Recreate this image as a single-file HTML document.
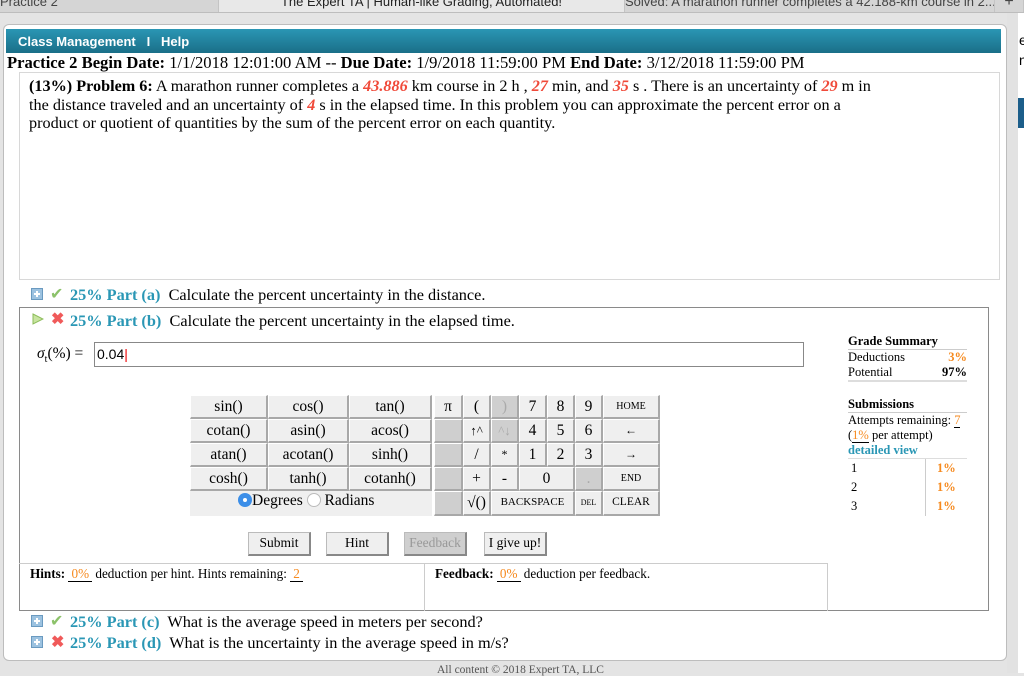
<!DOCTYPE html>
<html><head><meta charset="utf-8"><style>
*{margin:0;padding:0;box-sizing:border-box}
body{width:1024px;height:673px;overflow:hidden;background:#e4e4e4;font-family:"Liberation Serif",serif;position:relative;color:#000}
.a{position:absolute}
.tab{position:absolute;top:0;height:12px;font:13px "Liberation Sans",sans-serif;color:#444;line-height:4px;text-align:center;overflow:hidden;white-space:nowrap;border-right:1px solid #c4c4c4}
.c{position:absolute;background:#efefef;border-top:1px solid #fff;border-left:1px solid #fff;border-right:2px solid #a8a8a8;border-bottom:2px solid #a8a8a8;text-align:center;font-size:15.5px;line-height:21px}
.g{background:#cfcfcf}
.sm{font-size:10px}
.btn{position:absolute;top:532px;height:24px;width:63px;background:#efefef;border:1px solid #bbb;border-right:2px solid #888;border-bottom:2px solid #888;text-align:center;font-size:13.5px;line-height:20px}
.t{color:#2a97b5;font-weight:bold}
.o{color:#f68a1f}
.r{color:#f04a3a;font-weight:bold;font-style:italic}
.p{font-size:16.3px;white-space:nowrap}
</style></head><body>
<div class="tab" style="left:0;width:219px;background:#d5d5d5;text-align:left">Practice 2</div>
<div class="tab" style="left:219px;width:406px;background:#e8e8e8;color:#222">The Expert TA | Human-like Grading, Automated!</div>
<div class="tab" style="left:625px;width:370px;background:#d5d5d5">Solved: A marathon runner completes a 42.188-km course in 2...</div>
<div class="tab" style="left:995px;width:29px;background:#d5d5d5;font-size:16px">+</div>
<div class="a" style="left:0;top:12px;width:1024px;height:1px;background:#bdbdbd"></div>

<div class="a" style="left:1007px;top:13px;width:17px;height:660px;background:#fff"></div>
<div class="a" style="left:1007px;top:13px;width:11px;height:660px;background:#e2e2e2"></div>
<div class="a" style="left:1019px;top:30px;font:14px 'Liberation Sans',sans-serif;line-height:20px">e<br>n</div>
<div class="a" style="left:1018px;top:98px;width:6px;height:30px;background:#1c5e8a"></div>

<div class="a" style="left:3px;top:24px;width:1004px;height:637px;background:#fff;border:1px solid #bdbdbd;border-radius:6px"></div>
<div class="a" style="left:6px;top:29px;width:995px;height:24px;background:linear-gradient(#2a96b4,#1a6f88);color:#fff;font:bold 13px 'Liberation Sans',sans-serif;line-height:25px;padding-left:12px">Class Management &nbsp;&nbsp;I&nbsp;&nbsp; Help</div>
<div class="a" style="left:7px;top:53px;font-size:16.6px;line-height:19px;white-space:nowrap"><b>Practice 2 Begin Date:</b> 1/1/2018 12:01:00 AM -- <b>Due Date:</b> 1/9/2018 11:59:00 PM <b>End Date:</b> 3/12/2018 11:59:00 PM</div>
<div class="a" style="left:19px;top:72px;width:981px;height:208px;border:1px solid #d8d8d8"></div>
<div class="a" style="left:29px;top:77px;width:852px;font-size:16.2px;line-height:18.5px"><b>(13%) Problem 6:</b> A marathon runner completes a <span class="r">43.886</span> km course in 2 h , <span class="r">27</span> min, and <span class="r">35</span> s . There is an uncertainty of <span class="r">29</span> m in the distance traveled and an uncertainty of <span class="r">4</span> s in the elapsed time. In this problem you can approximate the percent error on a product or quotient of quantities by the sum of the percent error on each quantity.</div>

<svg class="a" style="left:31px;top:288px" width="12" height="12"><rect x="0.5" y="0.5" width="11" height="11" fill="#9cc2e0" stroke="#6a9ac0"/><path d="M3 6h6M6 3v6" stroke="#fff" stroke-width="2"/></svg>
<div class="a" style="left:50px;top:284px;color:#8cc26a;font-size:16px">✔</div>
<div class="a p" style="left:70px;top:285px"><span class="t">25% Part (a)</span>&nbsp; Calculate the percent uncertainty in the distance.</div>

<div class="a" style="left:19px;top:307px;width:970px;height:304px;border:1px solid #8a8a8a"></div>
<svg class="a" style="left:32px;top:313px" width="12" height="12"><path d="M1 1L11 6L1 11Z" fill="#c8e4a0" stroke="#8cbc5a"/></svg>
<div class="a" style="left:51px;top:309px;color:#f05a5a;font-size:16px;font-weight:bold">✖</div>
<div class="a p" style="left:70px;top:311px"><span class="t">25% Part (b)</span>&nbsp; Calculate the percent uncertainty in the elapsed time.</div>
<div class="a" style="left:37px;top:345px;font-size:15.5px"><i>σ</i><sub style="font-size:10px">t</sub>(%) =</div>
<div class="a" style="left:94px;top:342px;width:710px;height:25px;border:1px solid #888;font:14px 'Liberation Sans',sans-serif;line-height:23px;padding-left:2px">0.04<span style="color:#e00">|</span></div>

<div class="a" style="left:190px;top:395px;width:242px;height:121px;background:#efefef"></div>
<div class="c" style="left:190px;top:395px;width:78px;height:24px">sin()</div>
<div class="c" style="left:268px;top:395px;width:81px;height:24px">cos()</div>
<div class="c" style="left:349px;top:395px;width:83px;height:24px">tan()</div>
<div class="c" style="left:190px;top:419px;width:78px;height:24px">cotan()</div>
<div class="c" style="left:268px;top:419px;width:81px;height:24px">asin()</div>
<div class="c" style="left:349px;top:419px;width:83px;height:24px">acos()</div>
<div class="c" style="left:190px;top:443px;width:78px;height:24px">atan()</div>
<div class="c" style="left:268px;top:443px;width:81px;height:24px">acotan()</div>
<div class="c" style="left:349px;top:443px;width:83px;height:24px">sinh()</div>
<div class="c" style="left:190px;top:467px;width:78px;height:24px">cosh()</div>
<div class="c" style="left:268px;top:467px;width:81px;height:24px">tanh()</div>
<div class="c" style="left:349px;top:467px;width:83px;height:24px">cotanh()</div>
<div class="a" style="left:238px;top:491px;font-size:15.5px;line-height:20px;white-space:nowrap"><span style="display:inline-block;width:14px;height:14px;border-radius:50%;background:#3b8ee8;vertical-align:-2px;position:relative"><span style="position:absolute;left:5px;top:5px;width:4px;height:4px;background:#fff;border-radius:50%"></span></span>Degrees <span style="display:inline-block;width:14px;height:14px;border-radius:50%;background:#fff;border:1px solid #bbb;vertical-align:-2px"></span> Radians</div>

<div class="c" style="left:434px;top:395px;width:29px;height:24px">π</div>
<div class="c" style="left:463px;top:395px;width:28px;height:24px">(</div>
<div class="c g" style="left:491px;top:395px;width:28px;height:24px;color:#aaa">)</div>
<div class="c" style="left:519px;top:395px;width:28px;height:24px">7</div>
<div class="c" style="left:547px;top:395px;width:28px;height:24px">8</div>
<div class="c" style="left:575px;top:395px;width:28px;height:24px">9</div>
<div class="c sm" style="left:603px;top:395px;width:57px;height:24px">HOME</div>
<div class="c g" style="left:434px;top:419px;width:29px;height:24px"></div>
<div class="c" style="left:463px;top:419px;width:28px;height:24px;font-size:13px">↑^</div>
<div class="c g" style="left:491px;top:419px;width:28px;height:24px;font-size:13px;color:#aaa">^↓</div>
<div class="c" style="left:519px;top:419px;width:28px;height:24px">4</div>
<div class="c" style="left:547px;top:419px;width:28px;height:24px">5</div>
<div class="c" style="left:575px;top:419px;width:28px;height:24px">6</div>
<div class="c" style="left:603px;top:419px;width:57px;height:24px;font-size:12px">←</div>
<div class="c g" style="left:434px;top:443px;width:29px;height:24px"></div>
<div class="c" style="left:463px;top:443px;width:28px;height:24px">/</div>
<div class="c" style="left:491px;top:443px;width:28px;height:24px;font-size:12px">*</div>
<div class="c" style="left:519px;top:443px;width:28px;height:24px">1</div>
<div class="c" style="left:547px;top:443px;width:28px;height:24px">2</div>
<div class="c" style="left:575px;top:443px;width:28px;height:24px">3</div>
<div class="c" style="left:603px;top:443px;width:57px;height:24px;font-size:12px">→</div>
<div class="c g" style="left:434px;top:467px;width:29px;height:24px"></div>
<div class="c" style="left:463px;top:467px;width:28px;height:24px">+</div>
<div class="c" style="left:491px;top:467px;width:28px;height:24px">-</div>
<div class="c" style="left:519px;top:467px;width:56px;height:24px">0</div>
<div class="c g" style="left:575px;top:467px;width:28px;height:24px;color:#aaa">.</div>
<div class="c sm" style="left:603px;top:467px;width:57px;height:24px">END</div>
<div class="c g" style="left:434px;top:491px;width:29px;height:25px"></div>
<div class="c" style="left:463px;top:491px;width:28px;height:25px">√()</div>
<div class="c sm" style="left:491px;top:491px;width:84px;height:25px;font-size:11px">BACKSPACE</div>
<div class="c" style="left:575px;top:491px;width:28px;height:25px;font-size:8px">DEL</div>
<div class="c" style="left:603px;top:491px;width:57px;height:25px;font-size:11.5px">CLEAR</div>

<div class="btn" style="left:248px">Submit</div>
<div class="btn" style="left:326px">Hint</div>
<div class="btn" style="left:404px;background:#cfcfcf;color:#999">Feedback</div>
<div class="btn" style="left:484px">I give up!</div>

<div class="a" style="left:19px;top:563px;width:809px;height:48px;border-top:1px solid #ccc;border-right:1px solid #ccc"></div>
<div class="a" style="left:424px;top:563px;width:1px;height:48px;background:#ccc"></div>
<div class="a" style="left:30px;top:566px;font-size:13.2px;white-space:nowrap"><b>Hints:</b> <span class="o" style="border-bottom:1px solid #000;padding:0 3px">0%</span> deduction per hint. Hints remaining: <span class="o" style="border-bottom:1px solid #000;padding:0 3px">2</span></div>
<div class="a" style="left:435px;top:566px;font-size:13.2px;white-space:nowrap"><b>Feedback:</b> <span class="o" style="border-bottom:1px solid #000;padding:0 3px">0%</span> deduction per feedback.</div>

<div class="a" style="left:848px;top:334px;width:119px;font-size:12.5px;line-height:15px">
<div style="font-weight:bold;border-bottom:1px solid #ccc">Grade Summary</div>
<div style="display:flex;justify-content:space-between"><span>Deductions</span><b class="o">3%</b></div>
<div style="display:flex;justify-content:space-between;border-bottom:2px solid #ddd"><span>Potential</span><b>97%</b></div>
<div style="font-weight:bold;border-bottom:1px solid #ccc;margin-top:15px">Submissions</div>
<div>Attempts remaining: <span class="o" style="border-bottom:1px solid #000">7</span></div>
<div>(<span class="o" style="border-bottom:1px solid #000">1%</span> per attempt)</div>
<div class="t" style="border-bottom:1px solid #ddd">detailed view</div>
<div style="display:flex;line-height:19px"><span style="width:78px;padding-left:3px;border-right:1px solid #ccc">1<br>2<br>3</span><b class="o" style="padding-left:11px">1%<br>1%<br>1%</b></div>
</div>

<svg class="a" style="left:31px;top:615px" width="12" height="12"><rect x="0.5" y="0.5" width="11" height="11" fill="#9cc2e0" stroke="#6a9ac0"/><path d="M3 6h6M6 3v6" stroke="#fff" stroke-width="2"/></svg>
<div class="a" style="left:50px;top:611px;color:#8cc26a;font-size:16px">✔</div>
<div class="a p" style="left:70px;top:612px"><span class="t">25% Part (c)</span>&nbsp; What is the average speed in meters per second?</div>
<svg class="a" style="left:31px;top:636px" width="12" height="12"><rect x="0.5" y="0.5" width="11" height="11" fill="#9cc2e0" stroke="#6a9ac0"/><path d="M3 6h6M6 3v6" stroke="#fff" stroke-width="2"/></svg>
<div class="a" style="left:51px;top:632px;color:#f05a5a;font-size:16px;font-weight:bold">✖</div>
<div class="a p" style="left:70px;top:633px"><span class="t">25% Part (d)</span>&nbsp; What is the uncertainty in the average speed in m/s?</div>

<div class="a" style="left:437px;top:664px;font-size:11.5px;color:#555">All content © 2018 Expert TA, LLC</div>
</body></html>
